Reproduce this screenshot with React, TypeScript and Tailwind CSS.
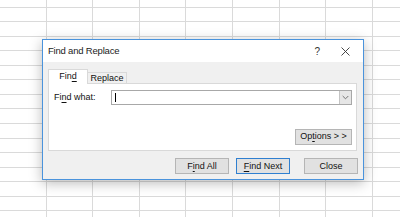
import React from "react";

const COLS = 9;
const ROWS = 15;

// spreadsheet behind the dialog
function Sheet() {
  const row = (h: string, key: number) => (
    <div key={key} className={`flex ${h}`}>
      {Array.from({ length: COLS }).map((_, c) => (
        <div key={c} className="w-[46.6px] shrink-0 border-r border-b border-[#dadada]" />
      ))}
    </div>
  );
  return (
    <div className="flex flex-col">
      {row("h-[7.5px]", 0)}
      {Array.from({ length: ROWS }).map((_, r) => row("h-[14.57px]", r + 1))}
    </div>
  );
}

const U: React.FC<{ children: React.ReactNode }> = ({ children }) => (
  <span className="underline underline-offset-[1.5px] decoration-[0.8px]">{children}</span>
);

function Button({
  children,
  primary,
  className = "",
}: {
  children: React.ReactNode;
  primary?: boolean;
  className?: string;
}) {
  return (
    <button
      className={`h-[16px] flex items-center justify-center bg-[#e1e1e1] text-[9px] leading-none text-[#111] ${
        primary ? "border-[1.5px] border-[#2f7fd0]" : "border border-[#b5b5b5]"
      } ${className}`}
    >
      {children}
    </button>
  );
}

export default function App() {
  return (
    <div className="relative w-[400px] h-[217px] overflow-hidden bg-white font-['Liberation_Sans',Arial,sans-serif]">
      <Sheet />

      {/* Find and Replace dialog */}
      <div className="absolute left-[42px] top-[39px] w-[322px] h-[141px] flex flex-col border border-[#4a93dc] bg-[#f0f0f0] shadow-[0_3px_12px_rgba(0,0,0,0.28)]">
        {/* title bar */}
        <div className="h-[22px] shrink-0 flex items-center bg-white pl-[5px]">
          <span className="text-[9.5px] tracking-[-0.2px] text-[#222]">Find and Replace</span>
          <span className="ml-auto mr-[21px] text-[10px] text-[#333]">?</span>
          <svg className="mr-[13px]" width="9" height="9" viewBox="0 0 9 9" aria-hidden="true">
            <path d="M0.5 0.5L8.5 8.5M8.5 0.5L0.5 8.5" stroke="#333" strokeWidth="0.9" />
          </svg>
        </div>

        {/* body */}
        <div className="flex-1 flex flex-col pl-[5px] pr-[6px] pt-[6px]">
          {/* tabs */}
          <div className="flex items-end h-[15px]">
            <div className="w-[40px] h-[15px] flex items-center justify-center bg-white border border-b-0 border-[#d9d9d9] text-[9px] text-[#111] relative z-10 -mb-px pb-px">
              Fin<U>d</U>
            </div>
            <div className="w-[39px] h-[11.5px] flex items-center justify-center bg-[#f0f0f0] border border-l-0 border-b-0 border-[#d9d9d9] text-[9px] text-[#111] pt-[1px]">
              Re<U>p</U>lace
            </div>
          </div>

          {/* panel */}
          <div className="w-[309px] h-[68px] bg-white border border-[#d9d9d9] flex flex-col pl-[5px] pr-[4px] pt-[6px]">
            <div className="flex items-center h-[14.5px]">
              <span className="w-[57px] text-[9px] text-[#111]">
                Fi<U>n</U>d what:
              </span>
              <div className="flex-1 h-[14.5px] flex items-center border border-[#a8a8a8] bg-white">
                <div className="ml-[3px] w-px h-[9px] bg-black" />
                <div className="ml-auto w-[12px] h-full flex items-center justify-center bg-[#e6e6e6] border-l border-[#c4c4c4]">
                  <svg width="7" height="5" viewBox="0 0 7 5" aria-hidden="true">
                    <path d="M0.7 1L3.5 3.8L6.3 1" fill="none" stroke="#666" strokeWidth="0.9" />
                  </svg>
                </div>
              </div>
            </div>
            <div className="flex-1" />
            <div className="flex justify-end mb-[5.5px]">
              <Button className="w-[57px] h-[16.5px]">
                Op<U>t</U>ions &gt; &gt;
              </Button>
            </div>
          </div>

          {/* bottom buttons */}
          <div className="flex justify-end items-center mt-[7px] -mr-[1px] gap-[7px]">
            <Button className="w-[54px]">
              F<U>i</U>nd All
            </Button>
            <Button primary className="w-[54px] mr-[7px]">
              <U>F</U>ind Next
            </Button>
            <Button className="w-[54px]">Close</Button>
          </div>
        </div>
      </div>
    </div>
  );
}
